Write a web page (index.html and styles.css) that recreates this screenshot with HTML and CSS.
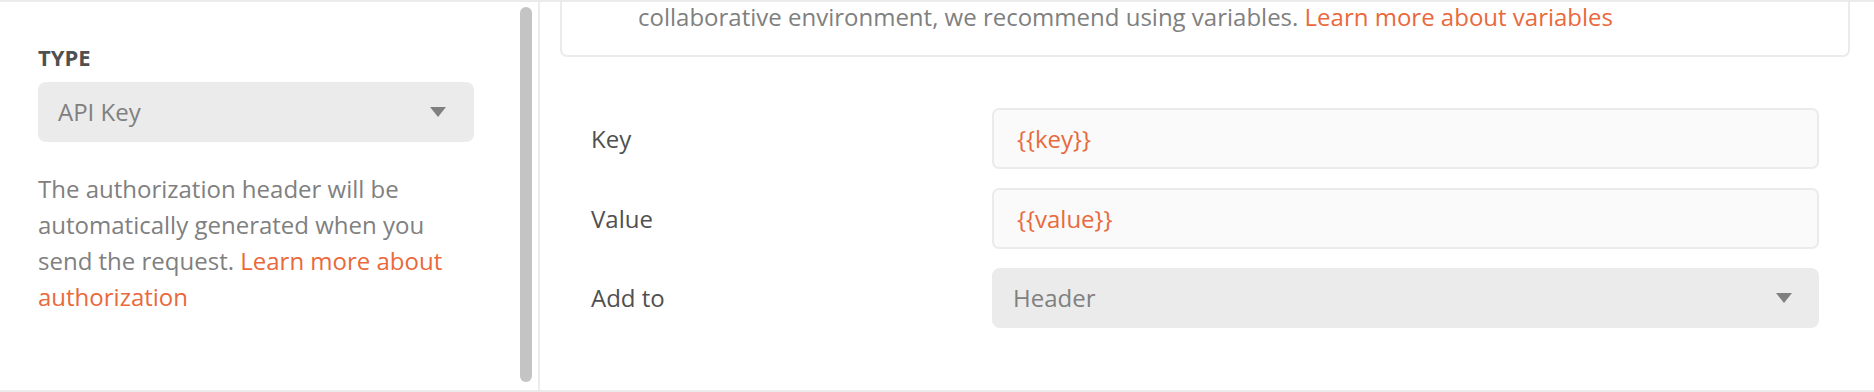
FILE: index.html
```html
<!DOCTYPE html>
<html lang="en">
<head>
<meta charset="utf-8">
<title>Authorization</title>
<link rel="stylesheet" href="styles.css">
</head>
<body>
<div class="auth">
  <aside class="side">
    <div class="side-content">
      <div class="type-label">TYPE</div>
      <div class="select select-type">
        <span class="select-text">API Key</span>
        <svg class="caret" width="16" height="10" viewBox="0 0 16 10"><polygon points="0,0 16,0 8,10" fill="#808080"/></svg>
      </div>
      <p class="desc">The authorization header will be automatically generated when you send the request. <span class="link">Learn more about authorization</span></p>
    </div>
    <div class="scroll-track"><div class="scroll-thumb"></div></div>
  </aside>
  <main class="main">
    <div class="info">collaborative environment, we recommend using variables. <span class="link">Learn more about variables</span></div>
    <div class="form">
      <div class="label">Key</div>
      <div class="field"><span class="var">{{key}}</span></div>
      <div class="label">Value</div>
      <div class="field"><span class="var">{{value}}</span></div>
      <div class="label">Add to</div>
      <div class="select select-add">
        <span class="select-text">Header</span>
        <svg class="caret" width="16" height="10" viewBox="0 0 16 10"><polygon points="0,0 16,0 8,10" fill="#808080"/></svg>
      </div>
    </div>
  </main>
</div>
</body>
</html>
```

FILE: styles.css
```css
* { box-sizing: border-box; }
html, body {
  margin: 0;
  padding: 0;
  background: #ffffff;
}
body {
  font-family: "Open Sans", "Noto Sans", sans-serif;
  font-size: 24px;
  line-height: 36px;
  color: #808080;
}
.auth {
  display: flex;
  width: 1874px;
  height: 392px;
  border-top: 2px solid #ebebeb;
  border-bottom: 2px solid #ebebeb;
  overflow: hidden;
}
.side {
  width: 538px;
  flex: none;
  display: flex;
  border-right: 2px solid #ebebeb;
  width: 540px;
}
.side-content {
  width: 520px;
  padding-left: 38px;
  padding-top: 39px;
}
.type-label {
  font-size: 22px;
  line-height: 32px;
  font-weight: 700;
  color: #505050;
}
.select {
  display: flex;
  align-items: center;
  justify-content: space-between;
  background: #ebebeb;
  border-radius: 8px;
  color: #808080;
}
.select-type {
  margin-top: 9px;
  width: 436px;
  height: 60px;
  padding: 0 28px 0 20px;
}
.caret { display: block; flex: none; }
.desc {
  margin: 29px 0 0;
  width: 436px;
}
.link { color: #e9693c; }
.scroll-track {
  width: 12px;
  flex: none;
  padding: 5px 0 8px;
  margin-right: 6px;
}
.scroll-thumb {
  height: 100%;
  background: #c4c4c4;
  border-radius: 6px;
}
.main {
  flex: 1;
  padding: 0 24px 0 20px;
}
.info {
  border: 2px solid #ebebeb;
  border-top: none;
  border-radius: 0 0 7px 7px;
  line-height: 30px;
  padding: 0 20px 23px 76px;
  color: #808080;
}
.form {
  margin-top: 51px;
  padding: 0 31px;
  display: grid;
  grid-template-columns: 401px 1fr;
  row-gap: 19px;
  align-items: center;
}
.label { color: #505050; }
.field {
  height: 61px;
  border: 2px solid #ebebeb;
  border-radius: 7px;
  background: #fafafa;
  padding-left: 23px;
  display: flex;
  align-items: center;
}
.var { color: #e9693c; }
.select-add {
  height: 60px;
  padding: 0 27px 0 21px;
}
```
